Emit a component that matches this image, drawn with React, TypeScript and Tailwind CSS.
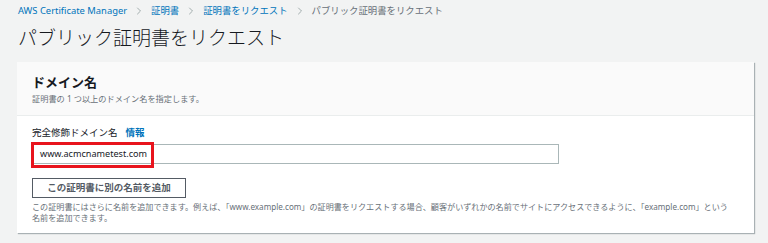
import { ChevronRight } from "lucide-react";

const FONT = { fontFamily: '"Noto Sans", "Noto Sans CJK JP", sans-serif' };

const crumbs = ["AWS Certificate Manager", "証明書", "証明書をリクエスト"];

export default function App() {
  return (
    <div className="h-[243px] w-[768px] overflow-hidden bg-[#f2f3f3] pl-[17px] pr-[14px]" style={FONT}>
      {/* パンくず */}
      <nav className="flex h-[22px] items-center pl-px text-[9.4px] leading-none">
        {crumbs.map((c) => (
          <span key={c} className="flex items-center">
            <span className="text-[#0073bb]">{c}</span>
            <ChevronRight className="mx-[6px] h-[12px] w-[12px] text-[#879596]" strokeWidth={1.5} />
          </span>
        ))}
        <span className="text-[#687078]">パブリック証明書をリクエスト</span>
      </nav>

      <h1 className="mt-[5px] pl-px text-[19px] font-light leading-[22px] text-[#16191f]">
        パブリック証明書をリクエスト
      </h1>

      {/* カード */}
      <div className="mt-[13px] bg-white shadow-[1px_1px_1px_0_rgba(0,28,36,0.3)]">
        <div className="h-[54px] border-b border-[#eaeded] bg-[#fafafa] px-[15px] pt-[12px]">
          <h2 className="text-[13px] font-bold leading-[17px] text-[#16191f]">ドメイン名</h2>
          <p className="mt-[1px] text-[8.2px] leading-[13px] text-[#687078]">
            証明書の 1 つ以上のドメイン名を指定します。
          </p>
        </div>

        <div className="px-[15px] pb-[10px] pt-[10px]">
          <div className="flex items-center gap-[8px] text-[9.5px] leading-[14px]">
            <span className="text-[#16191f]">完全修飾ドメイン名</span>
            <span className="font-bold text-[#0073bb]">情報</span>
          </div>

          <div className="relative mt-[4px] w-[527px]">
            <div className="flex h-[20px] items-center border border-[#aab7b8] bg-white pl-[7px] text-[9.1px] text-[#16191f]">
              www.acmcnametest.com
            </div>
            <div className="absolute left-[-1px] top-[-2px] h-[26px] w-[123px] border-[3px] border-[#e8141d]" />
          </div>

          <button className="mt-[14px] flex h-[20px] w-[154px] items-center justify-center border border-[#545b64] bg-white text-[9.5px] font-bold text-[#545b64]">
            この証明書に別の名前を追加
          </button>

          <p className="mt-[3px] w-[720px] text-[8.1px] leading-[11px] text-[#687078]">
            この証明書にはさらに名前を追加できます。例えば、「www.example.com」の証明書をリクエストする場合、顧客がいずれかの名前でサイトにアクセスできるように、「example.com」という
            <br />
            名前を追加できます。
          </p>
        </div>
      </div>
    </div>
  );
}
